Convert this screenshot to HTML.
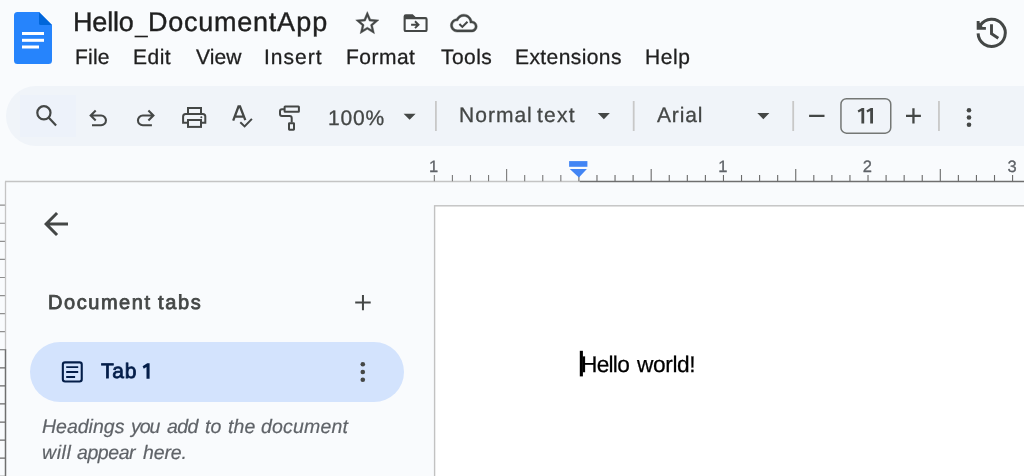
<!DOCTYPE html>
<html>
<head>
<meta charset="utf-8">
<title>Hello_DocumentApp</title>
<style>
*{box-sizing:border-box;margin:0;padding:0}
html,body{width:1024px;height:476px;overflow:hidden;background:#f9fbfd;font-family:"Liberation Sans",sans-serif;}
.t{position:absolute;white-space:nowrap;line-height:1;color:#1f1f1f;will-change:transform;text-rendering:geometricPrecision}
.abs{position:absolute}
.menu{color:#1f1f1f;-webkit-text-stroke:0.3px #1f1f1f}
.tb{color:#444746;-webkit-text-stroke:0.3px #444746}
#title{-webkit-text-stroke:0.4px #1f1f1f}
.sep{position:absolute;top:101px;width:1.4px;height:30px;background:#c7c7c7}
svg{position:absolute;overflow:visible;will-change:transform;text-rendering:geometricPrecision}
</style>
</head>
<body>
<!-- Docs logo -->
<svg id="logo" style="left:14px;top:12px" width="38" height="52" viewBox="0 0 38 52">
  <path d="M3.5 0H25L38 13V48.5A3.5 3.5 0 0 1 34.5 52H3.5A3.5 3.5 0 0 1 0 48.5V3.5A3.5 3.5 0 0 1 3.5 0Z" fill="#2684fc"/>
  <path d="M25 0L38 13H26.5A1.5 1.5 0 0 1 25 11.5Z" fill="#0066da"/>
  <rect x="8" y="20" width="22" height="3" fill="#fff"/>
  <rect x="8" y="26.8" width="22" height="3" fill="#fff"/>
  <rect x="8" y="33.5" width="17" height="3" fill="#fff"/>
</svg>

<!-- Title -->

<!-- Title icons -->

<!-- Menu -->

<!-- History icon -->

<!-- Toolbar -->
<div id="pill" class="abs" style="left:6px;top:86px;width:1100px;height:60px;border-radius:30px;background:#f0f4f9"></div>
<div id="srch" class="abs" style="left:20px;top:95px;width:56px;height:41.500px;background:#edf2fa;"></div>


<svg id="dots" style="left:966px;top:107px" width="6" height="21" viewBox="0 0 6 21" fill="#444746">
  <circle cx="3" cy="3.300" r="2.300"/><circle cx="3" cy="10.500" r="2.300"/><circle cx="3" cy="17.700" r="2.300"/>
</svg>

<!-- Ruler -->
<svg id="rulersvg" style="left:0;top:0" width="1024" height="476" viewBox="0 0 1024 476" fill="none">
  <path stroke="#c4c4c4" stroke-width="1.500" d="M5 181.550H580"/>
  <path stroke="#6f6f6f" stroke-width="1.500" d="M579.800 181.550H1024"/>
  <path stroke="#7a7a7a" stroke-width="1.100" d="M434.34 175V181.300M452.41 175V181.300M470.48 175V181.300M488.55 175V181.300M506.62 169.1V181.300M524.69 175V181.300M542.76 175V181.300M560.83 175V181.300"/>
  <path stroke="#6a6a6a" stroke-width="1.100" d="M578.90 175V181.300M596.97 175V181.300M615.04 175V181.300M633.11 175V181.300M651.18 169.1V181.300M669.25 175V181.300M687.32 175V181.300M705.39 175V181.300M723.46 175V181.300M741.53 175V181.300M759.60 175V181.300M777.67 175V181.300M795.74 169.1V181.300M813.81 175V181.300M831.88 175V181.300M849.95 175V181.300M868.02 175V181.300M886.09 175V181.300M904.16 175V181.300M922.23 175V181.300M940.30 169.1V181.300M958.37 175V181.300M976.44 175V181.300M994.51 175V181.300M1012.58 175V181.300"/>
  <g font-family="Liberation Sans, sans-serif" font-size="16.500" fill="#5f6368" stroke="#5f6368" stroke-width="0.300"><text x="433.7" y="171.700" text-anchor="middle">1</text><text x="722.9" y="171.700" text-anchor="middle">1</text><text x="867.4" y="171.700" text-anchor="middle">2</text><text x="1012.0" y="171.700" text-anchor="middle">3</text></g>
  <rect x="569.100" y="161.100" width="18.300" height="5.700" fill="#4285f4"/>
  <path d="M569.800 168.900H586.900L578.900 177.600Z" fill="#4285f4"/>
  <path stroke="#8f8f8f" stroke-width="1.200" d="M0 205.20H5.500M0 223.27H5.500M0 241.34H5.500M0 259.41H5.500M0 277.48H5.500M0 295.55H5.500M0 313.62H5.500M0 331.69H5.500"/>
  <path stroke="#6a6a6a" stroke-width="1.200" d="M0 349.76H5.500M0 367.83H5.500M0 385.90H5.500M0 403.97H5.500M0 422.04H5.500M0 440.11H5.500M0 458.18H5.500M0 476.25H5.500"/>
  <path stroke="#c4c4c4" stroke-width="1.300" d="M5.500 181.550V350"/>
  <path stroke="#6f6f6f" stroke-width="1.500" d="M5.500 349.200V476"/>
</svg>

<svg id="back" style="left:38px;top:206.400px" width="36" height="36" viewBox="0 0 24 24" fill="#444746">
  <path d="M20 11H7.830l5.590-5.590L12 4l-8 8 8 8 1.410-1.410L7.830 13H20v-2z"/>
</svg>


<div id="tabpill" class="abs" style="left:30px;top:342px;width:374px;height:60px;border-radius:30px;background:#d3e3fd"></div>



<span id="t1" class="t" style="left:73.4px;top:9.1px;font-size:27px;letter-spacing:-0.17px;color:#1f1f1f;-webkit-text-stroke:0.4px #1f1f1f;">Hello</span>
<span id="t3" class="t" style="left:148.0px;top:9.1px;font-size:27px;letter-spacing:0.74px;color:#1f1f1f;-webkit-text-stroke:0.4px #1f1f1f;">Document</span>
<span id="t4" class="t" style="left:276.7px;top:9.1px;font-size:27px;letter-spacing:1.12px;color:#1f1f1f;-webkit-text-stroke:0.4px #1f1f1f;">App</span>
<span id="m1" class="t" style="left:74.9px;top:46.6px;font-size:21px;letter-spacing:0.22px;color:#1f1f1f;-webkit-text-stroke:0.3px #1f1f1f;">File</span>
<span id="m2" class="t" style="left:133.0px;top:46.6px;font-size:21px;letter-spacing:0.47px;color:#1f1f1f;-webkit-text-stroke:0.3px #1f1f1f;">Edit</span>
<span id="m3" class="t" style="left:195.5px;top:46.6px;font-size:21px;letter-spacing:0.09px;color:#1f1f1f;-webkit-text-stroke:0.3px #1f1f1f;">View</span>
<span id="m4" class="t" style="left:264.1px;top:46.6px;font-size:21px;letter-spacing:0.99px;color:#1f1f1f;-webkit-text-stroke:0.3px #1f1f1f;">Insert</span>
<span id="m5" class="t" style="left:346.2px;top:46.6px;font-size:21px;letter-spacing:0.48px;color:#1f1f1f;-webkit-text-stroke:0.3px #1f1f1f;">Format</span>
<span id="m6" class="t" style="left:441.0px;top:46.6px;font-size:21px;letter-spacing:0.46px;color:#1f1f1f;-webkit-text-stroke:0.3px #1f1f1f;">Tools</span>
<span id="m7" class="t" style="left:515.4px;top:46.6px;font-size:21px;letter-spacing:0.41px;color:#1f1f1f;-webkit-text-stroke:0.3px #1f1f1f;">Extensions</span>
<span id="m8" class="t" style="left:645.1px;top:46.6px;font-size:21px;letter-spacing:0.54px;color:#1f1f1f;-webkit-text-stroke:0.3px #1f1f1f;">Help</span>
<span id="zoom" class="t" style="left:327.6px;top:107.6px;font-size:21px;letter-spacing:0.83px;color:#444746;-webkit-text-stroke:0.3px #444746;">100%</span>
<span id="st1" class="t" style="left:458.9px;top:104.9px;font-size:21px;letter-spacing:1.02px;color:#444746;-webkit-text-stroke:0.3px #444746;">Normal</span>
<span id="st2" class="t" style="left:537.1px;top:104.9px;font-size:21px;letter-spacing:1.22px;color:#444746;-webkit-text-stroke:0.3px #444746;">text</span>
<span id="font" class="t" style="left:657.2px;top:104.9px;font-size:21px;letter-spacing:0.86px;color:#444746;-webkit-text-stroke:0.3px #444746;">Arial</span>
<span id="dt1" class="t" style="left:48.3px;top:292.7px;font-size:20px;letter-spacing:1.55px;color:#444746;-webkit-text-stroke:0.8px #444746;">Document</span>
<span id="dt2" class="t" style="left:158.4px;top:292.7px;font-size:20px;letter-spacing:1.68px;color:#444746;-webkit-text-stroke:0.8px #444746;">tabs</span>
<span id="tab1" class="t" style="left:101.0px;top:361.2px;font-size:21px;letter-spacing:0.79px;color:#041e49;-webkit-text-stroke:0.8px #041e49;">Tab</span>
<span id="h1a" class="t" style="left:42.1px;top:418.2px;font-size:19.5px;letter-spacing:0.0px;color:#5f6368;font-style:italic;-webkit-text-stroke:0.2px #5f6368;">Headings</span>
<span id="h1b" class="t" style="left:130.9px;top:418.2px;font-size:19.5px;letter-spacing:-1.03px;color:#5f6368;font-style:italic;-webkit-text-stroke:0.2px #5f6368;">you</span>
<span id="h1c" class="t" style="left:166.8px;top:418.2px;font-size:19.5px;letter-spacing:-0.54px;color:#5f6368;font-style:italic;-webkit-text-stroke:0.2px #5f6368;">add</span>
<span id="h1d" class="t" style="left:205.4px;top:418.2px;font-size:19.5px;letter-spacing:0.11px;color:#5f6368;font-style:italic;-webkit-text-stroke:0.2px #5f6368;">to</span>
<span id="h1e" class="t" style="left:227.8px;top:418.2px;font-size:19.5px;letter-spacing:0.09px;color:#5f6368;font-style:italic;-webkit-text-stroke:0.2px #5f6368;">the</span>
<span id="h1f" class="t" style="left:260.8px;top:418.2px;font-size:19.5px;letter-spacing:0.19px;color:#5f6368;font-style:italic;-webkit-text-stroke:0.2px #5f6368;">document</span>
<span id="h2a" class="t" style="left:41.6px;top:443.5px;font-size:19.5px;letter-spacing:0.6px;color:#5f6368;font-style:italic;-webkit-text-stroke:0.2px #5f6368;">will</span>
<span id="h2b" class="t" style="left:77.1px;top:443.5px;font-size:19.5px;letter-spacing:-0.42px;color:#5f6368;font-style:italic;-webkit-text-stroke:0.2px #5f6368;">appear</span>
<span id="h2c" class="t" style="left:143.3px;top:443.5px;font-size:19.5px;letter-spacing:-0.14px;color:#5f6368;font-style:italic;-webkit-text-stroke:0.2px #5f6368;">here.</span>
<!-- Icons in absolute page coords -->
<svg id="icons" style="left:0;top:0" width="1024" height="476" viewBox="0 0 1024 476" fill="none" stroke="#444746" stroke-width="2.1" stroke-linejoin="miter">
  <!-- star -->
  <g transform="translate(353.4 9.3) scale(1.16)" fill="#444746" stroke="#444746" stroke-width="0.350">
    <path d="M22 9.24l-7.190-.62L12 2 9.190 8.630 2 9.240l5.460 4.730L5.820 21 12 17.270 18.180 21l-1.630-7.030L22 9.240zM12 15.400l-3.760 2.270 1-4.280-3.320-2.880 4.380-.38L12 6.100l1.710 4.040 4.380.38-3.320 2.880 1 4.280L12 15.400z"/>
  </g>
  <!-- folder move -->
  <path fill="#444746" stroke="none" fill-rule="evenodd" d="M403.600 16.400a2.200 2.200 0 0 1 2.200-2.200h6.900l2.900 2.900h9.800a2.200 2.200 0 0 1 2.200 2.200v10.600a2.200 2.200 0 0 1-2.200 2.200h-19.600a2.200 2.200 0 0 1-2.200-2.200zM405.700 19.200v10.700h19.800v-10.700z"/>
  <path stroke-width="1.900" d="M411.100 24.700H418.200M415 21.300L418.500 24.700L415 28.100"/>
  <!-- cloud done -->
  <g transform="translate(450.400 9.700) scale(1.117)" fill="#444746" stroke="#444746" stroke-width="0.350">
    <path d="M19.350 10.040C18.670 6.590 15.640 4 12 4 9.110 4 6.600 5.640 5.350 8.040 2.340 8.360 0 10.910 0 14c0 3.310 2.690 6 6 6h13c2.760 0 5-2.240 5-5 0-2.640-2.050-4.780-4.650-4.960zM19 18H6c-2.210 0-4-1.790-4-4s1.790-4 4-4h.71C7.370 7.690 9.480 6 12 6c3.040 0 5.500 2.460 5.500 5.500v.5H19c1.660 0 3 1.340 3 3s-1.340 3-3 3z"/>
  </g>
  <path stroke-width="2.100" d="M459.400 24.100L462.300 26.900L467.500 21.700"/>
  <!-- history -->
  <path stroke-width="3" d="M980.300 25.500A13.600 13.600 0 1 1 978.100 33.400"/>
  <path fill="#444746" stroke="none" d="M976.700 21.100h2.900v1.500l3 4.300h3.300v2.900h-9.200z"/>
  <path stroke-width="2.900" d="M991.500 24.300V33.700L998.300 38.300"/>
  <!-- search -->
  <circle cx="43.900" cy="112.800" r="6.600" stroke-width="2.200"/>
  <path stroke-width="2.200" d="M48.600 117.500L56.100 125.400"/>
  <!-- undo -->
  <path d="M95.700 110.600L90.700 115.500L95.700 120.400M91.200 115.500H101.100A4.850 4.850 0 0 1 101.100 125.200H92"/>
  <!-- redo -->
  <path d="M148.400 110.600L153.400 115.500L148.400 120.400M152.900 115.500H142.800A4.850 4.850 0 0 0 142.800 125.200H151.900"/>
  <!-- print -->
  <path stroke-width="2" d="M188 113.300V108.100H201V113.300"/>
  <path stroke-width="2" d="M188 122.700H183.100V116.600a2.500 2.500 0 0 1 2.500-2.500H202.800a2.500 2.500 0 0 1 2.500 2.500V122.700H201"/>
  <rect stroke-width="2" x="188" y="120" width="13" height="6.900"/>
  <circle cx="201.300" cy="117.200" r="1" fill="#444746" stroke="none"/>
  <!-- spellcheck -->
  <path stroke-width="2.300" d="M233.200 120.600L238.500 106.500H240L245.300 120.200M235.600 116.700H243"/>
  <path stroke-width="2" d="M240.300 122.300L244.600 126.400L251.900 118.900"/>
  <!-- paint format -->
  <rect stroke-width="2" x="284.600" y="106.400" width="14.300" height="5.300" rx="0.500"/>
  <path stroke-width="2" d="M284.600 109.300H282a2 2 0 0 0-2 2V114.100a2 2 0 0 0 2 2H289.700a2 2 0 0 1 2 2V122.600"/>
  <rect stroke-width="2" x="289" y="123.200" width="5" height="6.500" rx="0.400"/>
  <!-- separators -->
  <path stroke="#c8c8c8" stroke-width="1.800" d="M435.900 101V131M633.700 101V131M793.200 101V131M938.950 101V131"/>
  <rect x="840.950" y="98.650" width="49.800" height="34.500" rx="5.500" stroke="#747775" stroke-width="1.500"/>
  <!-- minus / plus / add / tab dots -->
  <path stroke-width="2.300" d="M809.100 115.850H824.500M906 115.900H920.900M913.450 108.300V123.500"/>
  <path stroke-width="2" d="M355.200 302.600H370.700M362.950 294.900V310.300"/>
  <g fill="#444746" stroke="none"><circle cx="362.800" cy="364.300" r="2.300"/><circle cx="362.800" cy="372" r="2.300"/><circle cx="362.800" cy="379.700" r="2.300"/></g>
  <!-- dropdown arrows -->
  <path fill="#444746" stroke="none" d="M403.600 113.800H415.600L409.600 119.800ZM597.800 113.100H609.900L603.850 119.200ZM757.300 113.100H769.400L763.350 119.200Z"/>
  <!-- font size 11 -->
  <path fill="#444746" stroke="none" d="M864.200 107.900H861.900L857.600 110.400L858.600 112.500L861.400 110.900V123.600H864.200Z"/>
  <path fill="#444746" stroke="none" d="M873 107.900H870.700L866.400 110.400L867.400 112.500L870.200 110.900V123.600H873Z"/>
  <!-- tab "1" and title underscore -->
  <path fill="#041e49" stroke="none" d="M149.600 363.300H147.200L142.600 366.200L143.800 368.700L146.500 367.100V378.700H149.600Z"/>
  <rect x="134.600" y="35.700" width="13.300" height="1.600" fill="#1f1f1f" stroke="none"/>
  <!-- back arrow -->
  <!-- tab icon -->
  <g stroke="#041e49">
    <rect stroke-width="2.100" x="62.850" y="362.350" width="18.900" height="19.100" rx="2.200"/>
    <path stroke-width="1.900" d="M66.200 367.100H78.200M66.200 372H78.200M66.200 377H75.100"/>
  </g>
</svg>

<!-- Page -->
<svg id="pagesvg" style="left:0;top:0" width="1024" height="476" viewBox="0 0 1024 476"><rect x="434.600" y="205.800" width="700" height="400" fill="#fff" stroke="#c2c2c2" stroke-width="1.400"/></svg>
<svg id="cursor" style="left:0;top:0" width="1024" height="476" viewBox="0 0 1024 476"><rect x="579.800" y="350.800" width="3.100" height="25.600" fill="#000"/></svg>

<span id="doc1" class="t" style="left:581.0px;top:352.6px;font-size:22.7px;letter-spacing:-0.73px;color:#000;-webkit-text-stroke:0.25px #000;">Hello</span>
<span id="doc2" class="t" style="left:636.8px;top:352.6px;font-size:22.7px;letter-spacing:-0.37px;color:#000;-webkit-text-stroke:0.25px #000;">world!</span>
</body>
</html>
